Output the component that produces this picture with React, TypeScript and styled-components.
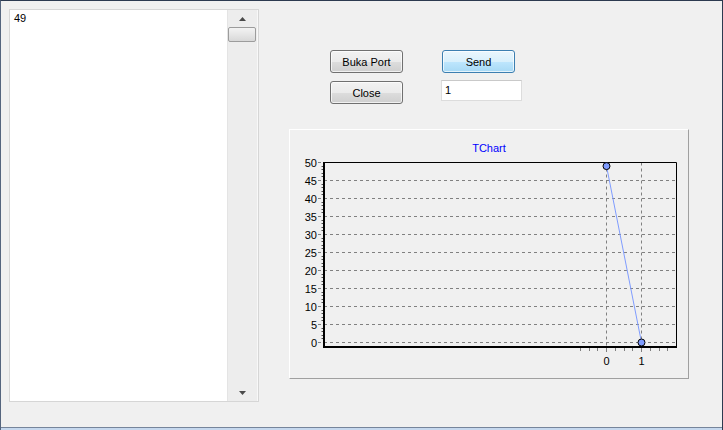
import React from "react";
import styled, { createGlobalStyle } from "styled-components";

const GlobalStyle = createGlobalStyle`
  html, body {
    margin: 0;
    padding: 0;
    background: #f0f0f0;
  }
  body {
    font-family: "Liberation Sans", Arial, sans-serif;
    font-size: 11px;
    color: #000;
  }
`;

const Window = styled.div`
  width: 723px;
  height: 430px;
  box-sizing: border-box;
  display: flex;
  align-items: flex-start;
  padding: 8px 0 0 8px;
  background: #f0f0f0;
  border-top: 1px solid #2c3a50;
  border-right: 1px solid #2c3a50;
  border-left: 1px solid #55657e;
  box-shadow: inset 0 -2px 0 #c6d8ee, inset 0 -3px 0 #76859b;
`;

const Memo = styled.div`
  width: 250px;
  height: 393px;
  box-sizing: border-box;
  display: flex;
  border: 1px solid #d6d6d6;
  background: #fff;
`;

const MemoText = styled.div`
  flex: 1;
  padding: 2px 4px;
  line-height: 13px;
`;

const ScrollBar = styled.div`
  width: 31px;
  display: flex;
  flex-direction: column;
  box-sizing: border-box;
  background: #ededed;
  border-left: 1px solid #e4e4e4;
  border-right: 1px solid #f8f8f8;
`;

const ArrowButton = styled.div`
  height: 17px;
  display: flex;
  align-items: center;
  justify-content: center;
`;

const Thumb = styled.div`
  height: 15px;
  margin: 0 1px 0 0;
  box-sizing: border-box;
  border: 1px solid #9c9c9c;
  border-radius: 2px;
  background: linear-gradient(to bottom, #f3f3f3, #e6e6e6 50%, #d8d8d8);
`;

const Track = styled.div`
  flex: 1;
`;

const RightSide = styled.div`
  margin-left: 30px;
  display: flex;
  flex-direction: column;
`;

const Controls = styled.div`
  display: flex;
  margin: 41px 0 0 41px;
  gap: 38px;
`;

const ControlColumn = styled.div<{ $gap: number }>`
  display: flex;
  flex-direction: column;
  gap: ${(p) => p.$gap}px;
`;

const Button = styled.button<{ $default?: boolean }>`
  width: 73px;
  height: 23px;
  margin-left: ${(p) => (p.$default ? 1 : 0)}px;
  padding: 0;
  box-sizing: border-box;
  font-family: "Liberation Sans", Arial, sans-serif;
  font-size: 11px;
  color: #000;
  border-radius: 3px;
  border: 1px solid ${(p) => (p.$default ? "#3c7fb1" : "#707070")};
  background: ${(p) =>
    p.$default
      ? "linear-gradient(to bottom, #eaf6fd 0%, #d9f0fc 50%, #bee6fd 51%, #a7d9f5 100%)"
      : "linear-gradient(to bottom, #f2f2f2 0%, #ebebeb 50%, #dddddd 51%, #cfcfcf 100%)"};
  box-shadow: inset 0 0 0 1px rgba(255, 255, 255, 0.7);
`;

const Edit = styled.div`
  width: 81px;
  height: 21px;
  box-sizing: border-box;
  border: 1px solid #dcdcdc;
  border-top-color: #c9c9c9;
  background: #fff;
  padding: 3px 0 0 3px;
  line-height: 13px;
`;

const ChartPanel = styled.div`
  width: 400px;
  height: 250px;
  margin-top: 25px;
  box-sizing: border-box;
  border-top: 1px solid #ffffff;
  border-left: 1px solid #ffffff;
  border-bottom: 1px solid #a0a0a0;
  border-right: 1px solid #a0a0a0;
  display: flex;
  flex-direction: column;
`;

const ChartTitle = styled.div`
  margin-top: 12px;
  height: 13px;
  line-height: 13px;
  text-align: center;
  color: #0000ff;
`;

const Plot = styled.svg`
  display: block;
  font-family: "Liberation Sans", Arial, sans-serif;
  font-size: 11px;
`;

const ox = 290;
const oy = 155;
const yOf = (v: number) => 342 - 3.6 * v - oy;
const xOf = (u: number) => 606 + 35 * u - ox;

const Chart = () => {
  const left = 323 - ox;
  const right = 676.5 - ox;
  const top = 162.5 - oy;
  const bottom = 192;
  const majors = [0, 5, 10, 15, 20, 25, 30, 35, 40, 45, 50];
  const minors = Array.from({ length: 51 }, (_, i) => i).filter((v) => v % 5 !== 0);
  const xMinors = [-0.75, -0.5, -0.25, 0.25, 0.5, 0.75, 1.25, 1.5, 1.75];
  const data = [49, 0];
  return (
    <Plot width={398} height={223} viewBox="0 0 398 223">
      {majors.map((v) => {
        const y = Math.round(yOf(v)) + 0.5;
        return (
          <g key={v}>
            <line x1={28} x2={right} y1={y} y2={y} stroke="#808080" strokeDasharray="3 3" />
            <text x={27} y={y + 4} textAnchor="end" fill="#000">
              {v}
            </text>
          </g>
        );
      })}
      {minors.map((v) => {
        const y = Math.round(yOf(v)) + 0.5;
        return <line key={v} x1={31.5} x2={33} y1={y} y2={y} stroke="#505050" />;
      })}
      {[0, 1].map((u) => (
        <g key={u}>
          <line
            x1={xOf(u) + 0.5}
            x2={xOf(u) + 0.5}
            y1={top}
            y2={bottom}
            stroke="#808080"
            strokeDasharray="3 3"
          />
          <line x1={xOf(u) + 0.5} x2={xOf(u) + 0.5} y1={bottom} y2={bottom + 5} stroke="#808080" />
          <text x={xOf(u) + 0.5} y={210} textAnchor="middle" fill="#000">
            {u}
          </text>
        </g>
      ))}
      {xMinors.map((u) => (
        <line
          key={u}
          x1={Math.round(xOf(u)) + 0.5}
          x2={Math.round(xOf(u)) + 0.5}
          y1={bottom}
          y2={bottom + 4}
          stroke="#808080"
        />
      ))}
      <line x1={left} x2={right} y1={top} y2={top} stroke="#000" />
      <line x1={right} x2={right} y1={top} y2={bottom} stroke="#000" />
      <line x1={left + 1} x2={left + 1} y1={top - 0.5} y2={bottom + 1} stroke="#000" strokeWidth={2} />
      <line x1={left} x2={right + 0.5} y1={bottom} y2={bottom} stroke="#000" strokeWidth={2} />
      <polyline
        points={data.map((v, i) => `${xOf(i) + 0.5},${yOf(v) + 0.5}`).join(" ")}
        fill="none"
        stroke="#7f9cff"
      />
      {data.map((v, i) => (
        <circle
          key={i}
          cx={xOf(i) + 0.5}
          cy={yOf(v) + 0.5}
          r={3.5}
          fill="#7f9cff"
          stroke="#000"
        />
      ))}
    </Plot>
  );
};

const ArrowUp = () => (
  <svg width="7" height="4" viewBox="0 0 7 4">
    <path d="M3.5 0 L7 4 L0 4 Z" fill="#4a4a4a" />
  </svg>
);

const ArrowDown = () => (
  <svg width="7" height="4" viewBox="0 0 7 4">
    <path d="M0 0 L7 0 L3.5 4 Z" fill="#4a4a4a" />
  </svg>
);

const App = () => {
  return (
    <>
      <GlobalStyle />
      <Window>
        <Memo>
          <MemoText>49</MemoText>
          <ScrollBar>
            <ArrowButton>
              <ArrowUp />
            </ArrowButton>
            <Thumb />
            <Track />
            <ArrowButton>
              <ArrowDown />
            </ArrowButton>
          </ScrollBar>
        </Memo>
        <RightSide>
          <Controls>
            <ControlColumn $gap={8}>
              <Button>Buka Port</Button>
              <Button>Close</Button>
            </ControlColumn>
            <ControlColumn $gap={7}>
              <Button $default>Send</Button>
              <Edit>1</Edit>
            </ControlColumn>
          </Controls>
          <ChartPanel>
            <ChartTitle>TChart</ChartTitle>
            <Chart />
          </ChartPanel>
        </RightSide>
      </Window>
    </>
  );
};

export default App;
